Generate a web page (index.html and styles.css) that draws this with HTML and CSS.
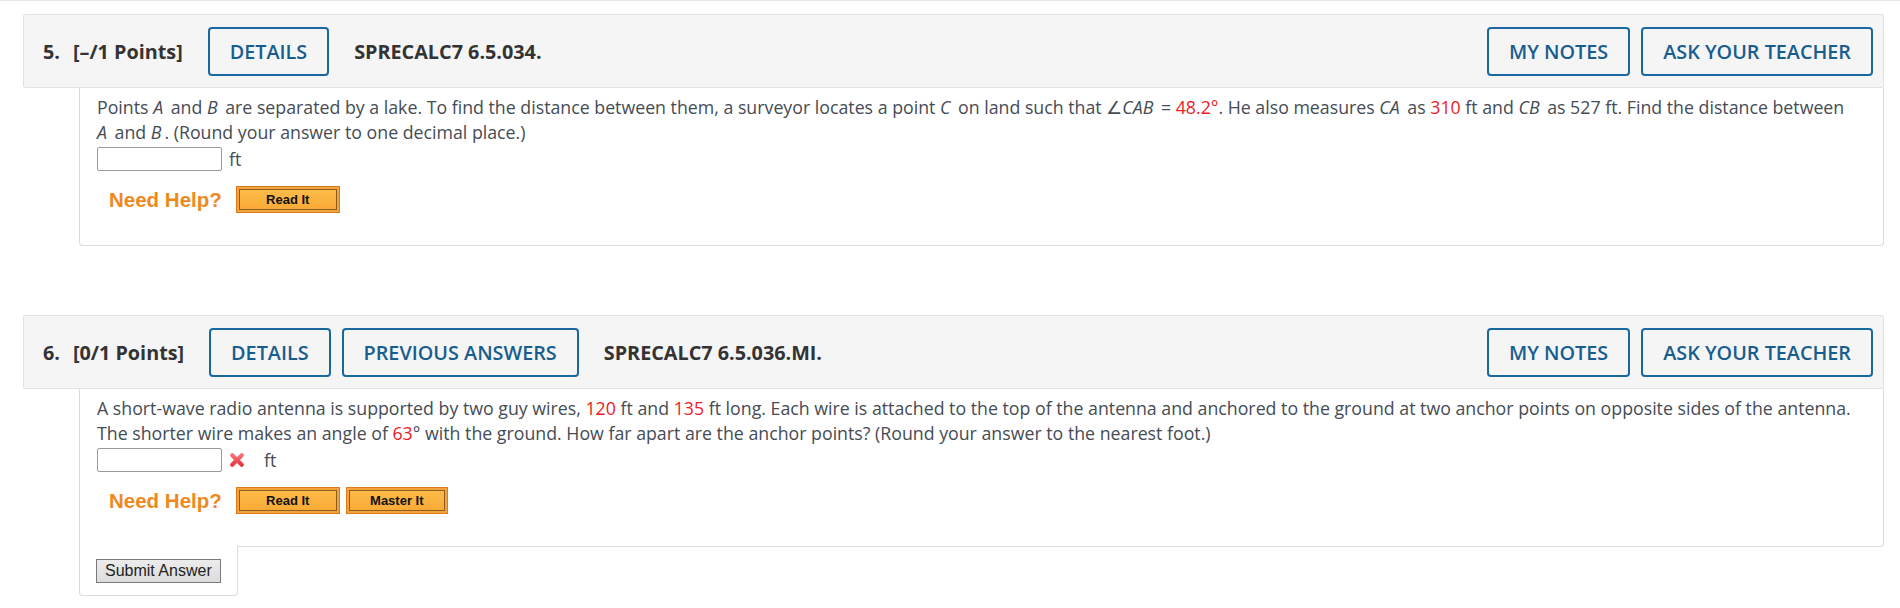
FILE: index.html
```html
<!DOCTYPE html>
<html lang="en">
<head>
    <meta charset="UTF-8">
    <meta name="viewport" content="width=device-width, initial-scale=1.0">
    <title>Assignment</title>
    <link rel="stylesheet" href="styles.css">
</head>
<body>
    <div class="topline"></div>

    <!-- question 5 -->
    <div class="question q5">
        <div class="qhead">
            <span class="qnum">5.</span>
            <span class="qpoints">[–/1 Points]</span>
            <button class="qbtn">DETAILS</button>
            <span class="qcode">SPRECALC7 6.5.034.</span>
            <div class="qright">
                <button class="qbtn">MY NOTES</button>
                <button class="qbtn">ASK YOUR TEACHER</button>
            </div>
        </div>
        <div class="qbody">
            <p class="qtext">Points <i class="var">A</i> and <i class="var">B</i> are separated by a lake. To find the distance between them, a surveyor locates a point <i class="var">C</i> on land such that ∠<i class="var">CAB</i> = <span class="red">48.2°</span>. He also measures <i class="var">CA</i> as <span class="red">310</span> ft and <i class="var">CB</i> as 527 ft. Find the distance between<br><i class="var">A</i> and <i class="var">B</i>. (Round your answer to one decimal place.)</p>
            <div class="answer">
                <input type="text" class="ans-input">
                <span class="unit">ft</span>
            </div>
            <div class="help">
                <span class="help-label">Need Help?</span>
                <button class="help-btn">Read It</button>
            </div>
        </div>
    </div>

    <!-- question 6 -->
    <div class="question q6">
        <div class="qhead">
            <span class="qnum">6.</span>
            <span class="qpoints">[0/1 Points]</span>
            <button class="qbtn">DETAILS</button>
            <button class="qbtn">PREVIOUS ANSWERS</button>
            <span class="qcode">SPRECALC7 6.5.036.MI.</span>
            <div class="qright">
                <button class="qbtn">MY NOTES</button>
                <button class="qbtn">ASK YOUR TEACHER</button>
            </div>
        </div>
        <div class="qbody has-submit">
            <p class="qtext">A short-wave radio antenna is supported by two guy wires, <span class="red">120</span> ft and <span class="red">135</span> ft long. Each wire is attached to the top of the antenna and anchored to the ground at two anchor points on opposite sides of the antenna. The shorter wire makes an angle of <span class="red">63</span>° with the ground. How far apart are the anchor points? (Round your answer to the nearest foot.)</p>
            <div class="answer">
                <input type="text" class="ans-input">
                <svg class="wrong" width="16" height="16" viewBox="0 0 16 16">
                    <defs>
                        <linearGradient id="xg" x1="0" y1="0" x2="0" y2="1">
                            <stop offset="0" stop-color="#f7707a"/>
                            <stop offset="1" stop-color="#e23a44"/>
                        </linearGradient>
                    </defs>
                    <path d="M3.2 3.2 L12.8 12.8 M12.8 3.2 L3.2 12.8" stroke="url(#xg)" stroke-width="4.2" stroke-linecap="round"/>
                </svg>
                <span class="unit unit-wide">ft</span>
            </div>
            <div class="help">
                <span class="help-label">Need Help?</span>
                <button class="help-btn">Read It</button>
                <button class="help-btn">Master It</button>
            </div>
        </div>
        <div class="submit-tab">
            <button class="submit-btn">Submit Answer</button>
        </div>
    </div>
</body>
</html>
```

FILE: styles.css
```css
body {
    margin: 0;
    background-color: #fff;
    font-family: "Open Sans", "Liberation Sans", sans-serif;
}
.topline {
    height: 1px;
    background-color: #e6e6e6;
}
.q5 {
    margin-top: 13px;
}
.q6 {
    margin-top: 69px;
}
.qhead {
    display: flex;
    align-items: center;
    height: 74px;
    box-sizing: border-box;
    margin: 0 16px 0 23px;
    padding: 0 10px 0 19px;
    background-color: #f5f5f5;
    border: 1px solid #e2e2e2;
    border-radius: 2px;
    color: #333;
    font-size: 19.8px;
    font-weight: 700;
}
.qnum {
    margin-right: 13px;
}
.qpoints {
    margin-right: 25px;
}
.qcode {
    margin-left: 14px;
}
.qright {
    margin-left: auto;
    display: flex;
    gap: 11px;
}
.qbtn {
    height: 49px;
    padding: 0 20px;
    margin-right: 11px;
    background: transparent;
    border: 2px solid #1a68a0;
    border-radius: 4px;
    color: #175d8f;
    font-family: "Open Sans", sans-serif;
    font-size: 19.8px;
    font-weight: 600;
    line-height: 27px;
}
.qright .qbtn {
    margin-right: 0;
}
.qbody {
    margin: 0 16px 0 79px;
    padding: 7px 30px 32px 17px;
    border: 1px solid #dcdcdc;
    border-top: none;
    border-radius: 0 0 4px 4px;
    color: #454c55;
    font-size: 17.75px;
    line-height: 25px;
}
.qbody.has-submit {
    border-bottom-left-radius: 0;
}
.qtext {
    margin: 0;
}
.var {
    padding-right: 3px;
}
.red {
    color: #ee1c25;
}
.answer {
    display: flex;
    align-items: center;
    margin-top: 2px;
    height: 24px;
}
.ans-input {
    width: 125px;
    height: 24px;
    box-sizing: border-box;
    margin: 0;
    border: 1px solid #9a9a9a;
    border-radius: 2px;
}
.unit {
    margin-left: 7px;
}
.wrong {
    margin-left: 7px;
}
.unit-wide {
    margin-left: 19px;
}
.help {
    display: flex;
    align-items: center;
    gap: 6px;
    margin-top: 15px;
    padding-left: 12px;
}
.help-label {
    margin-right: 8px;
    color: #f0891d;
    font-family: "Liberation Sans", Arial, sans-serif;
    font-size: 20.5px;
    font-weight: 700;
    line-height: 27px;
}
.help-btn {
    width: 104px;
    height: 27px;
    padding: 0;
    border: 1px solid #dc7c1c;
    background: linear-gradient(#fdbd4c, #f9a832);
    box-shadow: inset 0 0 0 2px #f5a23a, inset 0 0 0 3px #8a5d22;
    color: #111;
    font-family: "Liberation Sans", Arial, sans-serif;
    font-size: 13px;
    font-weight: 700;
}
.help-btn + .help-btn {
    width: 102px;
}
.submit-tab {
    position: relative;
    width: 159px;
    box-sizing: border-box;
    margin: -1px 0 0 79px;
    padding: 13px 0 12px 16px;
    background-color: #fff;
    border: 1px solid #dcdcdc;
    border-top: none;
    border-radius: 0 0 4px 4px;
}
.submit-btn {
    display: block;
    height: 24px;
    padding: 0 8px;
    background: linear-gradient(#ececec, #dcdcdc);
    border: 1px solid #7a7a7a;
    color: #222;
    font-family: "Liberation Sans", Arial, sans-serif;
    font-size: 16px;
}
```
